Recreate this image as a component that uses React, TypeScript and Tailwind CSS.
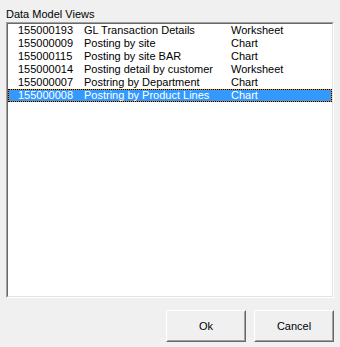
import React from 'react';

interface ViewRow {
  id: string;
  name: string;
  kind: string;
}

const rows: ViewRow[] = [
  { id: '155000193', name: 'GL Transaction Details', kind: 'Worksheet' },
  { id: '155000009', name: 'Posting by site', kind: 'Chart' },
  { id: '155000115', name: 'Posting by site BAR', kind: 'Chart' },
  { id: '155000014', name: 'Posting detail by customer', kind: 'Worksheet' },
  { id: '155000007', name: 'Postring by Department', kind: 'Chart' },
  { id: '155000008', name: 'Postring by Product Lines', kind: 'Chart' },
];

function RowCells({ row }: { row: ViewRow }) {
  return (
    <>
      <span className="w-[66px] shrink-0">{row.id}</span>
      <span className="w-[147px] shrink-0 whitespace-nowrap">{row.name}</span>
      <span className="whitespace-nowrap">{row.kind}</span>
    </>
  );
}

function WinButton({ label }: { label: string }) {
  return (
    <button className="w-[80px] h-[32px] border border-t-white border-l-white border-b-[#696969] border-r-[#696969] bg-[#f0f0f0]">
      <div className="h-full w-full flex items-center justify-center border border-t-[#f0f0f0] border-l-[#f0f0f0] border-b-[#a0a0a0] border-r-[#a0a0a0] text-black">
        {label}
      </div>
    </button>
  );
}

export default function App() {
  const selected = '155000008';

  return (
    <div
      className="w-[340px] h-[347px] bg-[#f0f0f0] px-[6px] pt-[8px] text-[11px] leading-[13px] text-black"
      style={{ fontFamily: '"Liberation Sans", Arial, sans-serif' }}
    >
      {/* Label */}
      <div className="h-[14px]">Data Model Views</div>

      {/* Sunken list box */}
      <div className="h-[276px] border border-t-[#a0a0a0] border-l-[#a0a0a0] border-b-white border-r-white">
        <div className="h-full border border-t-[#696969] border-l-[#696969] border-b-[#e3e3e3] border-r-[#e3e3e3] bg-white">
          {rows.map((row) =>
            row.id === selected ? (
              <div key={row.id} className="h-[13px] bg-[#e08a1e] border border-dotted border-black">
                <div className="h-full flex items-center bg-[#3399ff] text-white pl-[9px] leading-[11px]">
                  <RowCells row={row} />
                </div>
              </div>
            ) : (
              <div key={row.id} className="h-[13px] flex pl-[10px]">
                <RowCells row={row} />
              </div>
            )
          )}
        </div>
      </div>

      {/* Buttons */}
      <div className="flex justify-end gap-[8px] mt-[12px]">
        <WinButton label="Ok" />
        <WinButton label="Cancel" />
      </div>
    </div>
  );
}
